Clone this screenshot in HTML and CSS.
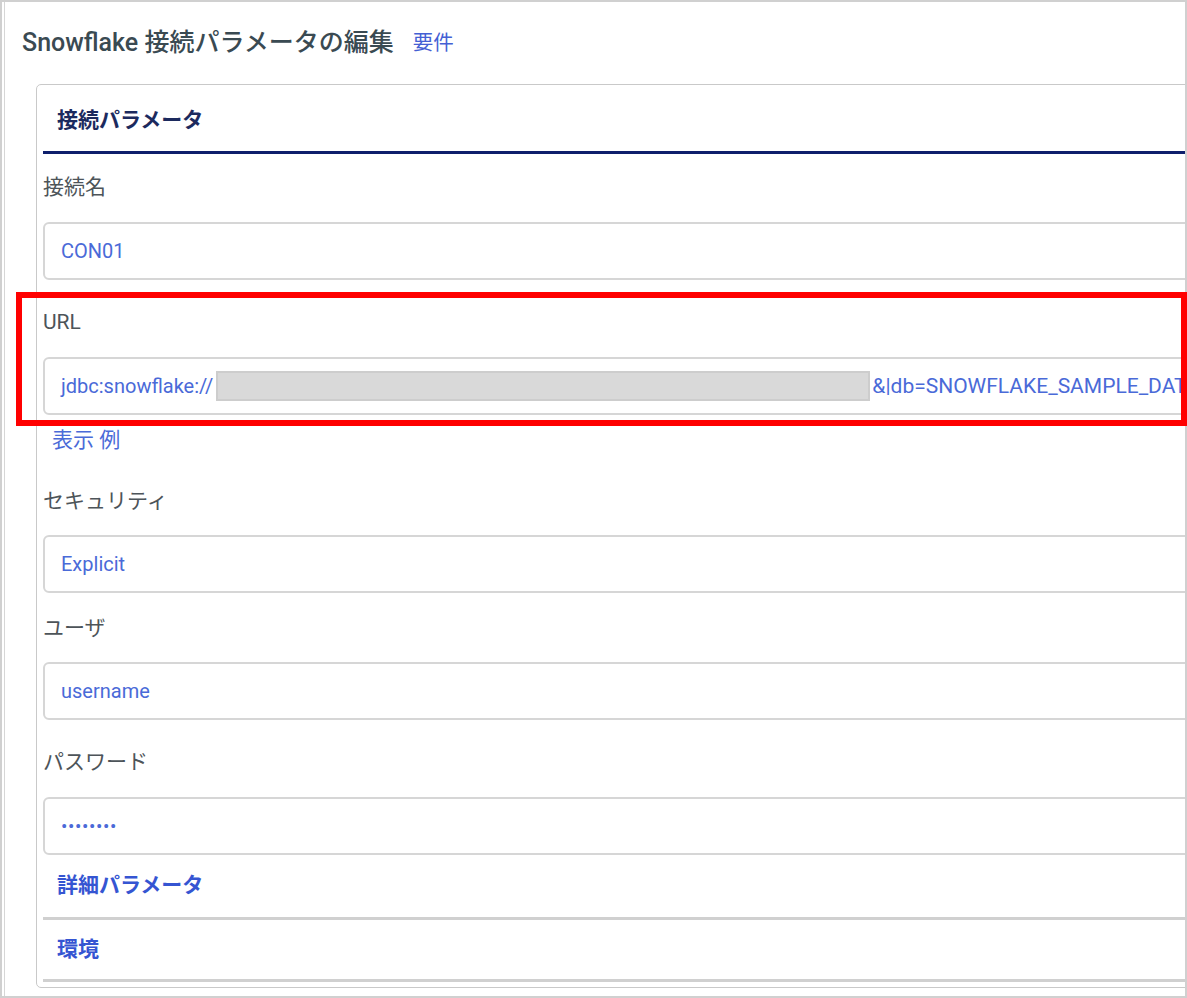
FILE: index.html
```html
<!DOCTYPE html>
<html lang="ja">
<head>
<meta charset="utf-8">
<title>Snowflake 接続パラメータの編集</title>
<link rel="stylesheet" href="styles.css">
</head>
<body>
<div class="page">
  <div class="frame">
    <div class="panel">
      <div class="title-row">
        <h1 class="title">Snowflake 接続パラメータの編集</h1>
        <a class="req-link">要件</a>
      </div>
      <section class="card">
        <div class="tab"><span class="tab-label">接続パラメータ</span></div>
        <div class="form">
          <div class="field field-first">
            <div class="label">接続名</div>
            <div class="input">CON01</div>
          </div>
          <div class="field field-url">
            <div class="label">URL</div>
            <div class="input"><span class="seg">jdbc:snowflake://</span><span class="redact"></span><span class="seg seg-tail">&amp;|db=SNOWFLAKE_SAMPLE_DATA&amp;schema=TPCH_SF1&amp;warehouse=COMPUTE_WH</span></div>
          </div>
          <div class="hint">表示 例</div>
          <div class="field field-sec">
            <div class="label">セキュリティ</div>
            <div class="input input-tight">Explicit</div>
          </div>
          <div class="field field-user">
            <div class="label">ユーザ</div>
            <div class="input input-tight">username</div>
          </div>
          <div class="field field-pass">
            <div class="label">パスワード</div>
            <div class="input input-pass">••••••••</div>
          </div>
        </div>
        <div class="section section-first">詳細パラメータ</div>
        <div class="section section-last">環境</div>
      </section>
    </div>
  </div>
  <div class="annotation"></div>
</div>
</body>
</html>
```

FILE: styles.css
```css
* { box-sizing: border-box; }
html, body { margin: 0; padding: 0; background: #ffffff; }
body {
  font-family: Roboto, "Noto Sans CJK JP", "Noto Sans", sans-serif;
  color: #50575c;
}
.page {
  position: relative;
  width: 1187px;
  height: 998px;
}
.frame {
  width: 1187px;
  height: 998px;
  border: 2px solid #d0d0d0;
  overflow: hidden;
  background: #fff;
}
.panel {
  height: 100%;
  margin-left: 2px;
  border-left: 1px solid #d6d6d6;
}
.title-row {
  display: flex;
  align-items: center;
  padding: 25px 0 0 17px;
  height: 57px;
}
.title {
  margin: 0;
  font-size: 25px;
  line-height: 32px;
  font-weight: 500;
  color: #3a4a52;
}
.req-link {
  margin-left: 19px;
  font-size: 20.5px;
  line-height: 32px;
  color: #4460d4;
}
.card {
  margin-top: 25px;
  margin-left: 31px;
  width: 1175px;
  border: 1px solid #c9c9c9;
  border-radius: 5px;
  padding: 0 6px 5px 6px;
}
.tab {
  padding: 21px 0 17px 14px;
  border-bottom: 3px solid #0e1f6c;
}
.tab-label {
  display: block;
  font-size: 21px;
  line-height: 28px;
  font-weight: 700;
  color: #1c2a5e;
}
.form {
  display: flex;
  flex-direction: column;
}
.label {
  font-size: 21px;
  line-height: 28px;
  color: #4d5459;
}
.input {
  display: flex;
  align-items: center;
  height: 58px;
  margin-top: 21px;
  padding: 0 16px;
  border: 2px solid #d6d6d6;
  border-radius: 6px;
  font-size: 20px;
  color: #4a6ad8;
  white-space: nowrap;
  overflow: hidden;
}
.input-tight { margin-top: 20px; }
.input-pass {
  font-size: 19px;
  letter-spacing: 0.6px;
}
.seg { flex-shrink: 0; }
.seg-tail { font-size: 21px; }
.redact {
  flex-shrink: 0;
  width: 654px;
  height: 30px;
  margin-left: 3px;
  margin-right: 2px;
  background: #d9d9d9;
  border: 2px solid #cdcdcd;
}
.field-first { margin-top: 19px; }
.field-url { margin-top: 28px; }
.hint {
  margin-top: 11px;
  padding-left: 9px;
  font-size: 21px;
  line-height: 28px;
  color: #4a6ad8;
}
.field-sec { margin-top: 33px; }
.field-user { margin-top: 21px; }
.field-pass { margin-top: 28px; }
.section {
  padding-left: 14px;
  font-size: 21px;
  line-height: 28px;
  font-weight: 700;
  color: #3555d2;
  border-bottom: 3px solid #d0d0d0;
}
.section-first { padding-top: 16px; padding-bottom: 18px; }
.section-last { padding-top: 15px; padding-bottom: 16px; }
.annotation {
  position: absolute;
  left: 16px;
  top: 292px;
  width: 1171px;
  height: 134px;
  border: 6px solid #ff0000;
  pointer-events: none;
}
```
